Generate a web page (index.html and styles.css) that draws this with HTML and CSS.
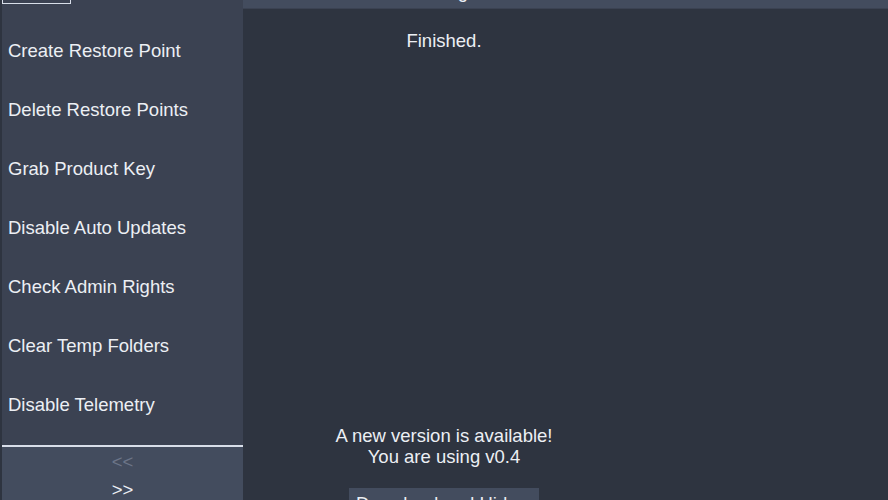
FILE: index.html
```html
<!DOCTYPE html>
<html lang="en">
<head>
<meta charset="utf-8">
<title>Tweaks</title>
<link rel="stylesheet" href="styles.css">
</head>
<body>
<div class="app">
  <aside class="sidebar">
    <div class="sb-top"><button class="menu-btn">Menu</button></div>
    <nav class="nav">
      <div class="nav-item">Create Restore Point</div>
      <div class="nav-item">Delete Restore Points</div>
      <div class="nav-item">Grab Product Key</div>
      <div class="nav-item">Disable Auto Updates</div>
      <div class="nav-item">Check Admin Rights</div>
      <div class="nav-item">Clear Temp Folders</div>
      <div class="nav-item">Disable Telemetry</div>
    </nav>
    <div class="divider"></div>
    <div class="pager">
      <div class="page-btn disabled">&lt;&lt;</div>
      <div class="page-btn">&gt;&gt;</div>
    </div>
  </aside>
  <main class="main">
    <header class="topbar"><div class="title">Settings</div></header>
    <section class="content">
      <div class="col">
        <p class="status">Finished.</p>
        <div class="update">A new version is available!<br>You are using v0.4</div>
        <button class="dl">Download and Hide</button>
      </div>
    </section>
  </main>
</div>
</body>
</html>
```
FILE: styles.css
```css
html, body {
  margin: 0;
  padding: 0;
  height: 500px;
  overflow: hidden;
  background: #2e3440;
}
body {
  font-family: "Liberation Sans", Arial, sans-serif;
  font-size: 18.5px;
  line-height: 21px;
  color: #eceff4;
}
.app {
  display: flex;
  height: 531px;
  margin-top: -31px;
}
.sidebar {
  box-sizing: border-box;
  width: 243px;
  flex: none;
  border-left: 2px solid #2e3440;
  background: #3b4252;
  display: flex;
  flex-direction: column;
}
.sb-top {
  height: 52px;
  flex: none;
}
.menu-btn {
  box-sizing: border-box;
  display: block;
  margin-top: 6px;
  width: 69px;
  height: 29px;
  border: 1px solid #d8dee9;
  background: transparent;
  color: #eceff4;
  font: 14px "Liberation Sans", Arial, sans-serif;
  padding: 0;
}
.nav {
  display: flex;
  flex-direction: column;
}
.nav-item {
  height: 59px;
  display: flex;
  align-items: center;
  padding-left: 6px;
  white-space: nowrap;
}
.divider {
  height: 2px;
  margin-top: 11px;
  background: #d8dee9;
  flex: none;
}
.pager {
  flex: 1;
  background: #434c5e;
  display: flex;
  flex-direction: column;
}
.page-btn {
  height: 28px;
  display: flex;
  align-items: center;
  justify-content: center;
}
.page-btn.disabled {
  color: #6c7588;
}
.main {
  flex: 1;
  display: flex;
  flex-direction: column;
}
.topbar {
  height: 39px;
  flex: none;
  background: #434c5e;
  border-bottom: 1px solid #3b4252;
}
.title {
  width: 402px;
  padding-top: 12px;
  text-align: center;
}
.content {
  flex: 1;
  display: flex;
  background: #2e3440;
}
.col {
  width: 402px;
  display: flex;
  flex-direction: column;
  align-items: center;
  text-align: center;
}
.status {
  margin: 0;
  padding-top: 21px;
}
.update {
  margin-top: 374px;
}
.dl {
  box-sizing: border-box;
  margin-top: 21px;
  width: 190px;
  border: none;
  background: #434c5e;
  color: #eceff4;
  font: inherit;
  line-height: 21px;
  padding: 5px 7px;
  text-align: left;
  white-space: nowrap;
}
```
